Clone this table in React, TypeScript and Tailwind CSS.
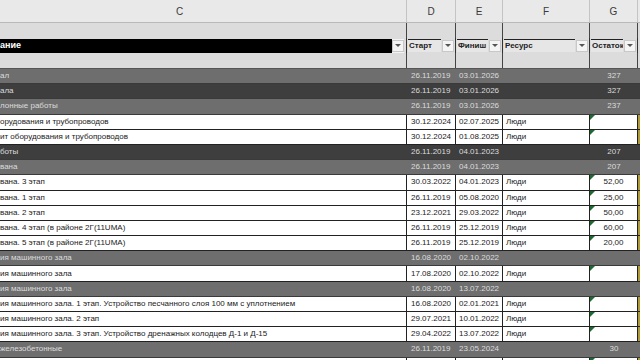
import React from "react";

type Row = {
  kind: "m" | "k" | "w";
  name: string;
  start: string;
  end: string;
  res?: string;
  rest?: string;
};

const rows: Row[] = [
  { kind: "m", name: "ал", start: "26.11.2019", end: "03.01.2026", rest: "327" },
  { kind: "k", name: "ала", start: "26.11.2019", end: "03.01.2026", rest: "327" },
  { kind: "m", name: "лонные работы", start: "26.11.2019", end: "03.01.2026", rest: "237" },
  { kind: "w", name: "орудования и трубопроводов", start: "30.12.2024", end: "02.07.2025", res: "Люди" },
  { kind: "w", name: "ит оборудования и трубопроводов", start: "30.12.2024", end: "01.08.2025", res: "Люди" },
  { kind: "k", name: "боты", start: "26.11.2019", end: "04.01.2023", rest: "207" },
  { kind: "m", name: "вана", start: "26.11.2019", end: "04.01.2023", rest: "207" },
  { kind: "w", name: "вана. 3 этап", start: "30.03.2022", end: "04.01.2023", res: "Люди", rest: "52,00" },
  { kind: "w", name: "вана. 1 этап", start: "26.11.2019", end: "05.08.2020", res: "Люди", rest: "25,00" },
  { kind: "w", name: "вана. 2 этап", start: "23.12.2021", end: "29.03.2022", res: "Люди", rest: "50,00" },
  { kind: "w", name: "вана. 4 этап (в районе 2Г(11UMA)", start: "26.11.2019", end: "25.12.2019", res: "Люди", rest: "60,00" },
  { kind: "w", name: "вана. 5 этап (в районе 2Г(11UMA)", start: "26.11.2019", end: "25.12.2019", res: "Люди", rest: "20,00" },
  { kind: "m", name: "ия машинного зала", start: "16.08.2020", end: "02.10.2022" },
  { kind: "w", name: "ия машинного зала", start: "17.08.2020", end: "02.10.2022", res: "Люди" },
  { kind: "m", name: "ия машинного зала", start: "16.08.2020", end: "13.07.2022" },
  { kind: "w", name: "ия машинного зала. 1 этап. Устройство песчанного слоя 100 мм с уплотнением", start: "16.08.2020", end: "02.01.2021", res: "Люди" },
  { kind: "w", name: "ия машинного зала. 2 этап", start: "29.07.2021", end: "10.01.2022", res: "Люди" },
  { kind: "w", name: "ия машинного зала. 3 этап. Устройство дренажных колодцев Д-1 и Д-15", start: "29.04.2022", end: "13.07.2022", res: "Люди" },
  { kind: "m", name: "железобетонные", start: "26.11.2019", end: "23.05.2024", rest: "30" },
  { kind: "w", name: "", start: "", end: "", res: "" },
];

const cols = "grid grid-cols-[407px_49px_47px_87px_48px_2px]";

const FilterButton = () => (
  <div className="w-[12px] h-[12px] bg-[#f4f4f4] border border-[#c8c8c8] flex items-center justify-center shrink-0">
    <div className="w-0 h-0 border-l-[3px] border-r-[3px] border-t-[3px] border-l-transparent border-r-transparent border-t-[#555]" />
  </div>
);

const HeadCell = ({ label }: { label: string }) => (
  <div className="border-r border-[#333] flex items-center pl-[1px] pr-[1px] gap-[1px] overflow-hidden">
    <div className="flex-1 h-[13px] bg-[#e6e6e6] flex items-center px-[1px] overflow-hidden border-t border-[#222]">
      <span className="text-[8px] font-bold text-[#222] leading-none whitespace-nowrap">{label}</span>
    </div>
    <FilterButton />
  </div>
);

const DataRow = ({ row }: { row: Row }) => {
  const white = row.kind === "w";
  const bg = row.kind === "m" ? "bg-[#6e6e6e]" : row.kind === "k" ? "bg-[#3e3e3e]" : "bg-white";
  const txt = white ? "text-[#1a1a1a]" : "text-[#dcdcdc]";
  const cell = white ? "border-r border-[#222]" : "";
  return (
    <div className={`${cols} ${bg} h-[15.2px] shrink-0 border-b ${white ? "border-[#222]" : "border-[#3a3a3a]"} text-[8px] leading-none ${txt}`}>
      <div className={`${cell} ${white ? "" : "border-r border-transparent"} flex items-center overflow-hidden whitespace-nowrap`}>
        {row.name}
      </div>
      <div className={`${cell} flex items-center pl-[4px] whitespace-nowrap overflow-hidden`}>{row.start}</div>
      <div className={`${cell} flex items-center pl-[3px] whitespace-nowrap overflow-hidden`}>{row.end}</div>
      <div className={`${cell} flex items-center pl-[3px] whitespace-nowrap overflow-hidden`}>{row.res}</div>
      <div className={`${cell} relative flex items-center justify-center whitespace-nowrap`}>
        {white && (
          <div className="absolute left-0 top-0 w-0 h-0 border-t-[5px] border-r-[5px] border-t-[#1d6b2f] border-r-transparent" />
        )}
        {row.rest}
      </div>
      <div className={white ? "bg-[#b09a35]" : ""} />
    </div>
  );
};

export default function App() {
  return (
    <div
      className="w-[640px] h-[360px] overflow-hidden bg-[#e9e9e9] flex flex-col"
      style={{ fontFamily: '"Liberation Sans", Arial, sans-serif' }}
    >
      {/* column letters */}
      <div className={`${cols} h-[23px] shrink-0 border-b border-[#b9b9b9] text-[10px] text-[#3a3a3a]`}>
        <div className="border-r border-[#c4c4c4] flex items-center pl-[176px]">C</div>
        <div className="border-r border-[#c4c4c4] flex items-center justify-center">D</div>
        <div className="border-r border-[#c4c4c4] flex items-center justify-center">E</div>
        <div className="border-r border-[#c4c4c4] flex items-center justify-center">F</div>
        <div className="border-r border-[#c4c4c4] flex items-center justify-center">G</div>
        <div />
      </div>

      {/* spacer row */}
      <div className={`${cols} h-[15px] shrink-0 bg-[#dcdcdc]`}>
        <div className="border-r border-[#444]" />
        <div className="border-r border-[#444]" />
        <div className="border-r border-[#444]" />
        <div className="border-r border-[#444]" />
        <div className="border-r border-[#444]" />
        <div />
      </div>

      {/* filter header */}
      <div className={`${cols} h-[15px] shrink-0 bg-[#dcdcdc]`}>
        <div className="border-r border-[#333] flex items-center pr-[2px]">
          <div className="flex-1 h-[14px] bg-black flex items-center">
            <span className="text-[9px] font-bold text-white leading-none">ание</span>
          </div>
          <div className="h-[14px] bg-[#f4f4f4] flex items-center">
            <FilterButton />
          </div>
        </div>
        <HeadCell label="Старт" />
        <HeadCell label="Финиш" />
        <HeadCell label="Ресурс" />
        <HeadCell label="Остаток" />
        <div />
      </div>

      {/* spacer row */}
      <div className={`${cols} h-[16px] shrink-0 bg-[#dcdcdc] border-b border-[#555]`}>
        <div className="border-r border-[#444]" />
        <div className="border-r border-[#444]" />
        <div className="border-r border-[#444]" />
        <div className="border-r border-[#444]" />
        <div className="border-r border-[#444]" />
        <div />
      </div>

      {rows.map((row, i) => (
        <DataRow key={i} row={row} />
      ))}
    </div>
  );
}
